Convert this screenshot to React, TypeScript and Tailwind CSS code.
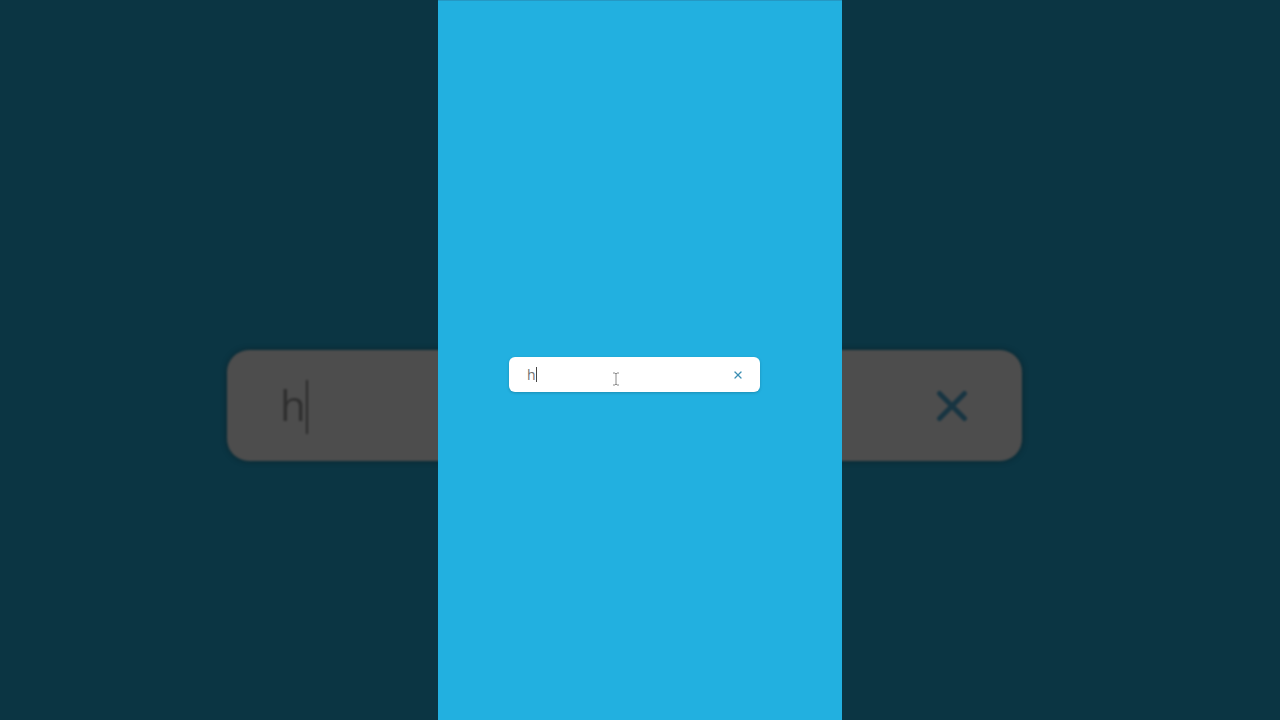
import { X } from 'lucide-react';

function Caret({ className }: { className: string }) {
  return <span className={className} />;
}

export default function App() {
  return (
    <main
      className="relative h-[720px] w-[1280px] overflow-hidden bg-[#0b3543]"
      style={{ fontFamily: '"Open Sans", "Liberation Sans", sans-serif' }}
    >
      {/* blurred, zoomed copy of the search bar behind the phone frame */}
      <div className="flex h-full items-start pl-[227px] pt-[350px]">
        <div className="flex h-[111px] w-[795px] items-center rounded-[22px] bg-[#4d4d4d] pl-[53px] pr-[45px] blur-[1px] shadow-[0_0_6px_rgba(0,0,0,0.35)]">
          <span className="mt-[-2px] text-[42px] leading-none text-[#2e2e2e]">h</span>
          <Caret className="ml-0 mt-[2px] h-[54px] w-[2px] bg-[#2a2a2a]" />
          <div className="flex-1" />
          <X className="h-[50px] w-[50px] text-[#183542]" strokeWidth={2.4} />
        </div>
      </div>

      {/* phone frame */}
      <div className="absolute left-[438px] top-0 h-full w-[404px] border-t border-[#2598c4] bg-[#22b0e0] pl-[71px] pt-[356px]">
        <div className="relative flex h-[35px] w-[251px] items-center rounded-[6px] bg-white pl-[18px] pr-[16px] shadow-[0_1px_3px_rgba(0,0,0,0.2)]">
          <span className="text-[14px] leading-none text-[#707070]">h</span>
          <Caret className="h-[15px] w-px bg-[#444]" />
          <div className="flex-1" />
          <X className="h-[12px] w-[12px] text-[#3d8fb3]" strokeWidth={2.5} />
          {/* mouse I-beam */}
          <svg
            className="absolute left-[103px] top-[15px]"
            width="8"
            height="14"
            viewBox="0 0 8 14"
          >
            <path
              d="M1 1h2l1 1 1-1h2M4 2v10M1 13h2l1-1 1 1h2"
              fill="none"
              stroke="#8a8a8a"
              strokeWidth="1"
            />
          </svg>
        </div>
      </div>
    </main>
  );
}
